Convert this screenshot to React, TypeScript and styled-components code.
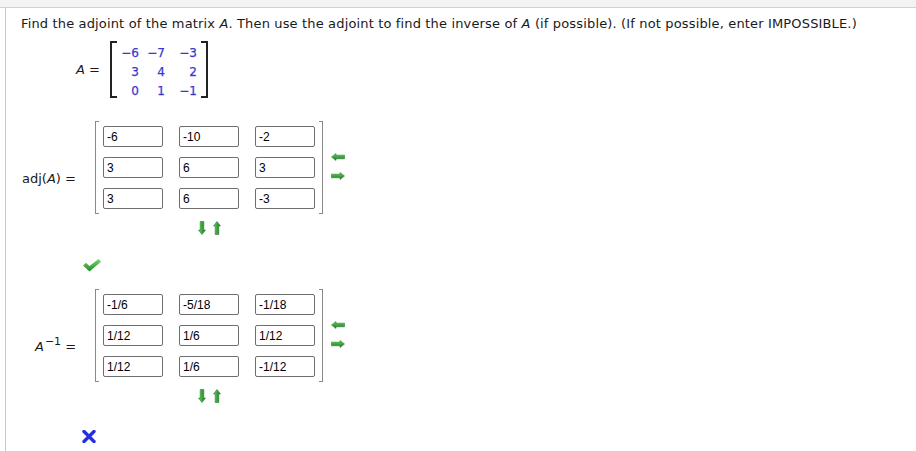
import styled, { createGlobalStyle } from "styled-components";

const GlobalStyle = createGlobalStyle`
  html, body {
    margin: 0;
    background: #fff;
  }
  body {
    font-family: "DejaVu Sans", Verdana, sans-serif;
    color: #1a1a1a;
  }
`;

const TopStrip = styled.div`
  height: 7px;
  background: #f3f3f3;
  border-bottom: 1px solid #d2d2d2;
`;

const Panel = styled.div`
  margin-left: 5px;
  border-left: 1px solid #c9c9c9;
  padding: 8px 0 0 15px;
  min-height: 443px;
  box-sizing: border-box;
`;

const Prompt = styled.p`
  margin: 0;
  font-size: 13px;
  line-height: 16px;
  letter-spacing: 0.15px;
  white-space: nowrap;
`;

const GivenRow = styled.div`
  display: flex;
  align-items: center;
  margin: 9px 0 0 55px;
  gap: 10px;
`;

const MathLabel = styled.span`
  font-size: 13px;
  white-space: nowrap;
`;

const Bracket = styled.div<{ $color: string; $w: number; $arm: number }>`
  box-sizing: border-box;
  border-left: ${({ $w, $color }) => `${$w}px solid ${$color}`};
  border-right: ${({ $w, $color }) => `${$w}px solid ${$color}`};
  background:
    linear-gradient(${({ $color }) => $color}, ${({ $color }) => $color}) top left / ${({ $arm }) => $arm}px ${({ $w }) => $w}px no-repeat,
    linear-gradient(${({ $color }) => $color}, ${({ $color }) => $color}) bottom left / ${({ $arm }) => $arm}px ${({ $w }) => $w}px no-repeat,
    linear-gradient(${({ $color }) => $color}, ${({ $color }) => $color}) top right / ${({ $arm }) => $arm}px ${({ $w }) => $w}px no-repeat,
    linear-gradient(${({ $color }) => $color}, ${({ $color }) => $color}) bottom right / ${({ $arm }) => $arm}px ${({ $w }) => $w}px no-repeat;
`;

const GivenGrid = styled.div`
  display: grid;
  grid-template-columns: 27px 26px 32px;
  grid-auto-rows: 19px;
  height: 57px;
  padding: 2px 9px 0 0;
  box-sizing: border-box;
  font-size: 12px;
  color: #3838d0;
  justify-items: end;
  align-items: center;
  -webkit-text-stroke: 0.25px #3838d0;
`;

const AnswerRow = styled.div<{ $top: number }>`
  display: flex;
  align-items: center;
  margin-top: ${({ $top }) => $top}px;
`;

const LabelCell = styled.div<{ $indent: number }>`
  width: 74px;
  box-sizing: border-box;
  padding-left: ${({ $indent }) => $indent}px;
  font-size: 13px;
  white-space: nowrap;
`;

const MatrixBlock = styled.div`
  display: flex;
  flex-direction: column;
  align-items: flex-start;
`;

const MatrixLine = styled.div`
  display: flex;
  align-items: center;
`;

const CellGrid = styled.div`
  display: grid;
  grid-template-columns: repeat(3, 60px);
  grid-auto-rows: 21px;
  column-gap: 16px;
  row-gap: 10px;
  padding: 5px 7px;
`;

const Cell = styled.input`
  width: 60px;
  height: 21px;
  box-sizing: border-box;
  margin: 0;
  padding: 0 3px;
  border: 1px solid #6e6e6e;
  border-radius: 2px;
  font-family: "Liberation Sans", Arial, sans-serif;
  font-size: 12px;
  color: #000;
  background: #fff;
  outline: none;
`;

const SideArrows = styled.div`
  display: flex;
  flex-direction: column;
  align-items: flex-start;
  gap: 11px;
  margin-left: 8px;
  margin-top: -2px;

  svg {
    display: block;
  }
`;

const BottomArrows = styled.div`
  display: flex;
  gap: 7px;
  margin: 7px 0 0 103px;
`;

const Mark = styled.div<{ $top: number }>`
  margin: ${({ $top }) => $top}px 0 0 61px;
  height: 13px;
  display: flex;
  align-items: center;
`;

const Sup = styled.sup`
  font-size: 11px;
  vertical-align: 6px;
  line-height: 0;
  margin-left: 1px;
`;

function GreenGrad({ id, vertical }: { id: string; vertical?: boolean }) {
  return (
    <defs>
      <linearGradient id={id} x1="0" y1="0" x2={vertical ? "1" : "0"} y2={vertical ? "0" : "1"}>
        <stop offset="0" stopColor="#74d06f" />
        <stop offset="0.5" stopColor="#3aa53a" />
        <stop offset="1" stopColor="#1e7424" />
      </linearGradient>
    </defs>
  );
}

function ArrowLeft({ id }: { id: string }) {
  return (
    <svg width="14" height="8" viewBox="0 0 14 8">
      <GreenGrad id={id} />
      <path d="M0.5 4 L5 0.5 L5 2.2 L13.5 2.2 L13.5 5.8 L5 5.8 L5 7.5 Z" fill={`url(#${id})`} stroke="#2f7f33" strokeWidth="0.6" />
    </svg>
  );
}

function ArrowRight({ id }: { id: string }) {
  return (
    <svg width="14" height="8" viewBox="0 0 14 8">
      <GreenGrad id={id} />
      <path d="M13.5 4 L9 0.5 L9 2.2 L0.5 2.2 L0.5 5.8 L9 5.8 L9 7.5 Z" fill={`url(#${id})`} stroke="#2f7f33" strokeWidth="0.6" />
    </svg>
  );
}

function ArrowDown({ id }: { id: string }) {
  return (
    <svg width="8" height="14" viewBox="0 0 8 14">
      <GreenGrad id={id} vertical />
      <path d="M2.2 0.5 H5.8 V9 H7.5 L4 13.5 L0.5 9 H2.2 Z" fill={`url(#${id})`} stroke="#2f7f33" strokeWidth="0.6" />
    </svg>
  );
}

function ArrowUp({ id }: { id: string }) {
  return (
    <svg width="8" height="14" viewBox="0 0 8 14">
      <GreenGrad id={id} vertical />
      <path d="M2.2 13.5 H5.8 V5 H7.5 L4 0.5 L0.5 5 H2.2 Z" fill={`url(#${id})`} stroke="#2f7f33" strokeWidth="0.6" />
    </svg>
  );
}

function Check() {
  return (
    <svg width="20" height="13" viewBox="0 0 20 13">
      <defs>
        <linearGradient id="ck" x1="0" y1="0" x2="0" y2="1">
          <stop offset="0" stopColor="#7ad86a" />
          <stop offset="1" stopColor="#1f8a25" />
        </linearGradient>
      </defs>
      <path d="M1 6.5 L4 3.8 L7.5 7 L16.5 0 L19 2.8 L7.5 12.5 Z" fill="url(#ck)" />
    </svg>
  );
}

function Cross() {
  return (
    <svg width="14" height="13" viewBox="0 0 14 13">
      <path d="M2 1.5 L12 11.5 M12 1.5 L2 11.5" stroke="#2430e0" strokeWidth="3.4" strokeLinecap="round" />
    </svg>
  );
}

const given = ["−6", "−7", "−3", "3", "4", "2", "0", "1", "−1"];
const adjoint = ["-6", "-10", "-2", "3", "6", "3", "3", "6", "-3"];
const inverse = ["-1/6", "-5/18", "-1/18", "1/12", "1/6", "1/12", "1/12", "1/6", "-1/12"];

function AnswerMatrix({ name, values }: { name: string; values: string[] }) {
  return (
    <MatrixBlock>
      <MatrixLine>
        <Bracket $color="#8a8a8a" $w={1} $arm={3}>
          <CellGrid>
            {values.map((v, i) => (
              <Cell key={i} defaultValue={v} readOnly />
            ))}
          </CellGrid>
        </Bracket>
        <SideArrows>
          <ArrowLeft id={`${name}-l`} />
          <ArrowRight id={`${name}-r`} />
        </SideArrows>
      </MatrixLine>
      <BottomArrows>
        <ArrowDown id={`${name}-d`} />
        <ArrowUp id={`${name}-u`} />
      </BottomArrows>
    </MatrixBlock>
  );
}

export default function App() {
  return (
    <>
      <GlobalStyle />
      <TopStrip />
      <Panel>
        <Prompt>
          Find the adjoint of the matrix <i>A</i>. Then use the adjoint to find the inverse of <i>A</i> (if
          possible). (If not possible, enter IMPOSSIBLE.)
        </Prompt>

        <GivenRow>
          <MathLabel>
            <i>A</i> =
          </MathLabel>
          <Bracket $color="#222" $w={2} $arm={5}>
            <GivenGrid>
              {given.map((v, i) => (
                <span key={i}>{v}</span>
              ))}
            </GivenGrid>
          </Bracket>
        </GivenRow>

        <AnswerRow $top={23}>
          <LabelCell $indent={1}>
            adj(<i>A</i>) =
          </LabelCell>
          <AnswerMatrix name="adj" values={adjoint} />
        </AnswerRow>

        <Mark $top={24}>
          <Check />
        </Mark>

        <AnswerRow $top={17}>
          <LabelCell $indent={14}>
            <i>A</i>
            <Sup>−1</Sup> =
          </LabelCell>
          <AnswerMatrix name="inv" values={inverse} />
        </AnswerRow>

        <Mark $top={27}>
          <Cross />
        </Mark>
      </Panel>
    </>
  );
}
